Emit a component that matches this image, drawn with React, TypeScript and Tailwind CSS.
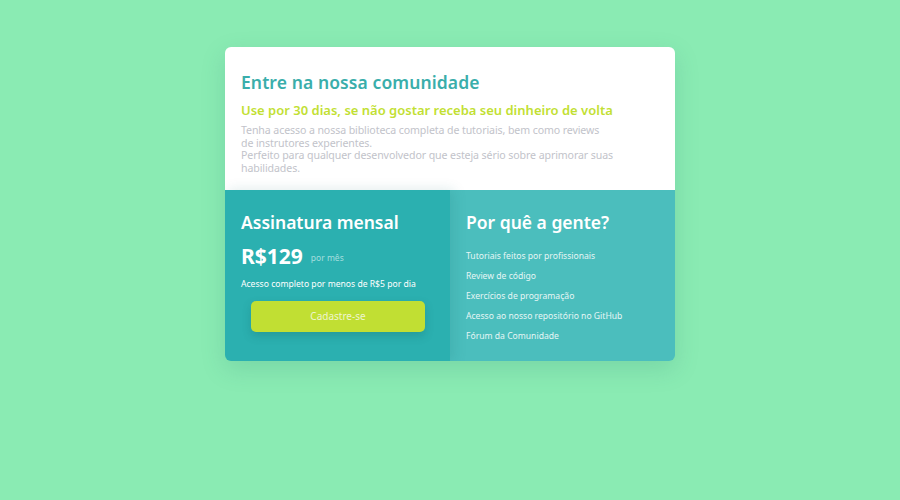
import React from 'react';

const features = [
  'Tutoriais feitos por profissionais',
  'Review de código',
  'Exercícios de programação',
  'Acesso ao nosso repositório no GitHub',
  'Fórum da Comunidade',
];

export default function App() {
  return (
    <div
      className="min-h-screen w-full bg-[#8aebb3] flex justify-center pt-[47px]"
      style={{ fontFamily: '"Noto Sans", "Open Sans", sans-serif' }}
    >
      <div className="w-[450px] h-[314px] rounded-md overflow-hidden shadow-[0_8px_24px_rgba(40,120,110,0.18)] flex flex-col">
        {/* Top section */}
        <div className="bg-white px-4 pt-[24px] h-[143px]">
          <h1 className="text-[#3aaeab] text-[17.5px] font-semibold leading-[22px] tracking-[0.1px]">
            Entre na nossa comunidade
          </h1>
          <h2 className="mt-[8px] text-[#c2df33] text-[13px] font-semibold leading-[18px]">
            Use por 30 dias, se não gostar receba seu dinheiro de volta
          </h2>
          <p className="mt-[5px] text-[#c2c3ca] text-[10.6px] tracking-[-0.1px] leading-[12.6px] w-[380px]">
            Tenha acesso a nossa biblioteca completa de tutoriais, bem como reviews
            <br />
            de instrutores experientes.
            <br />
            Perfeito para qualquer desenvolvedor que esteja sério sobre aprimorar suas habilidades.
          </p>
        </div>

        {/* Bottom section */}
        <div className="flex flex-1">
          <div className="w-1/2 bg-[#2bb0b0] px-4 pt-[20px] shadow-[4px_0_12px_rgba(20,110,110,0.15)] relative z-10">
            <h3 className="text-white text-[17.5px] font-semibold leading-[24px]">Assinatura mensal</h3>
            <div className="mt-[9px] flex items-center gap-[8px]">
              <span className="text-white text-[21px] font-bold leading-[26px]">R$129</span>
              <span className="text-[#a5dede] text-[8.5px] mt-[4px]">por mês</span>
            </div>
            <p className="mt-[9px] text-white text-[8.6px] leading-[12px]">
              Acesso completo por menos de R$5 por dia
            </p>
            <button className="mt-[11px] ml-[10px] w-[174px] h-[31px] rounded-[5px] bg-[#c1df33] text-[#eef5cf] text-[10px] shadow-[0_4px_8px_rgba(20,90,90,0.25)]">
              Cadastre-se
            </button>
          </div>
          <div className="w-1/2 bg-[#4bbebd] px-4 pt-[20px]">
            <h3 className="text-white text-[17.5px] font-semibold leading-[24px]">Por quê a gente?</h3>
            <ul className="mt-[16px] flex flex-col gap-[8px]">
              {features.map((f) => (
                <li key={f} className="text-[#e6f6f5] text-[8.6px] leading-[12px]">
                  {f}
                </li>
              ))}
            </ul>
          </div>
        </div>
      </div>
    </div>
  );
}
